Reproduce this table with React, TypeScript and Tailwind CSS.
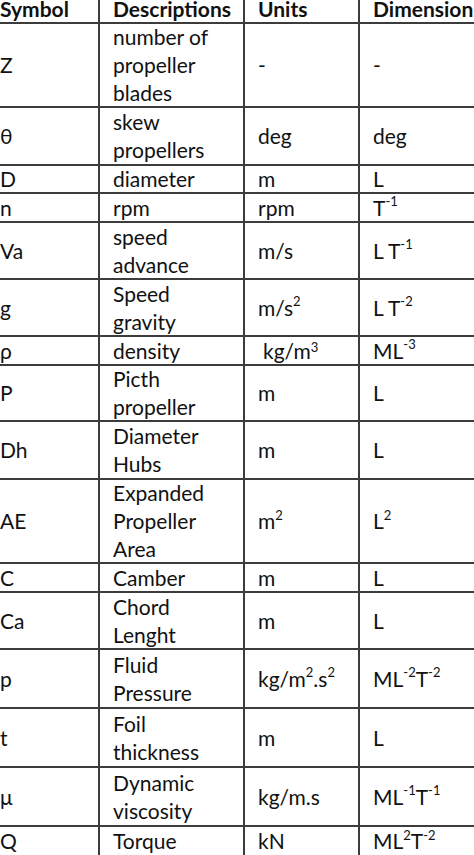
import React from 'react'

type Row = {
  h: string
  symbol: React.ReactNode
  desc: string[]
  unit: React.ReactNode
  dim: React.ReactNode
}

const Sup = ({ children }: { children: React.ReactNode }) => (
  <sup className="text-[13px] top-[-0.5em]">{children}</sup>
)

const rows: Row[] = [
  { h: 'h-[84px]', symbol: 'Z', desc: ['number of', 'propeller', 'blades'], unit: '-', dim: '-' },
  { h: 'h-[58px]', symbol: 'θ', desc: ['skew', 'propellers'], unit: 'deg', dim: 'deg' },
  { h: 'h-[28px]', symbol: 'D', desc: ['diameter'], unit: 'm', dim: 'L' },
  { h: 'h-[29px]', symbol: 'n', desc: ['rpm'], unit: 'rpm', dim: <>T<Sup>-1</Sup></> },
  { h: 'h-[57px]', symbol: 'Va', desc: ['speed', 'advance'], unit: 'm/s', dim: <>L T<Sup>-1</Sup></> },
  { h: 'h-[57px]', symbol: 'g', desc: ['Speed', 'gravity'], unit: <>m/s<Sup>2</Sup></>, dim: <>L T<Sup>-2</Sup></> },
  { h: 'h-[29px]', symbol: 'ρ', desc: ['density'], unit: <span className="pl-[5px]">kg/m<Sup>3</Sup></span>, dim: <>ML<Sup>-3</Sup></> },
  { h: 'h-[56px]', symbol: 'P', desc: ['Picth', 'propeller'], unit: 'm', dim: 'L' },
  { h: 'h-[58px]', symbol: 'Dh', desc: ['Diameter', 'Hubs'], unit: 'm', dim: 'L' },
  { h: 'h-[84px]', symbol: 'AE', desc: ['Expanded', 'Propeller', 'Area'], unit: <>m<Sup>2</Sup></>, dim: <>L<Sup>2</Sup></> },
  { h: 'h-[29px]', symbol: 'C', desc: ['Camber'], unit: 'm', dim: 'L' },
  { h: 'h-[57px]', symbol: 'Ca', desc: ['Chord', 'Lenght'], unit: 'm', dim: 'L' },
  { h: 'h-[59px]', symbol: 'p', desc: ['Fluid', 'Pressure'], unit: <>kg/m<Sup>2</Sup>.s<Sup>2</Sup></>, dim: <>ML<Sup>-2</Sup>T<Sup>-2</Sup></> },
  { h: 'h-[59px]', symbol: 't', desc: ['Foil', 'thickness'], unit: 'm', dim: 'L' },
  { h: 'h-[59px]', symbol: 'μ', desc: ['Dynamic', 'viscosity'], unit: 'kg/m.s', dim: <>ML<Sup>-1</Sup>T<Sup>-1</Sup></> },
  { h: 'h-[30px]', symbol: 'Q', desc: ['Torque'], unit: 'kN', dim: <>ML<Sup>2</Sup>T<Sup>-2</Sup></> },
]

const cell = 'flex items-center pl-[13px] border-r-2 border-[#3c3c3c] overflow-hidden'
const head = 'pl-[13px] border-r-2 border-[#3c3c3c] whitespace-nowrap'

export default function App() {
  return (
    <div
      className="w-[474px] h-[855px] overflow-hidden bg-white text-[#111] text-[21px] leading-[28px]"
      style={{ fontFamily: 'Lato, "Open Sans", sans-serif' }}
    >
      <div className="ml-[-13px] w-[520px]">
        {/* header, cut at the top of the page */}
        <div className="grid grid-cols-[113px_145px_115px_147px] h-[24px] border-b-2 border-[#3c3c3c] font-bold leading-[18px]">
          <div className={head}>Symbol</div>
          <div className={head}>Descriptions</div>
          <div className={head}>Units</div>
          <div className={head}>Dimension</div>
        </div>

        {rows.map((r, i) => (
          <div
            key={i}
            className={`grid grid-cols-[113px_145px_115px_147px] border-b-2 border-[#3c3c3c] ${r.h}`}
          >
            <div className={cell}>{r.symbol}</div>
            <div className={`${cell} flex-col items-start justify-center`}>
              {r.desc.map((d) => (
                <span key={d} className="whitespace-nowrap">{d}</span>
              ))}
            </div>
            <div className={`${cell} whitespace-nowrap`}>{r.unit}</div>
            <div className={`${cell} whitespace-nowrap`}>{r.dim}</div>
          </div>
        ))}
      </div>
    </div>
  )
}
